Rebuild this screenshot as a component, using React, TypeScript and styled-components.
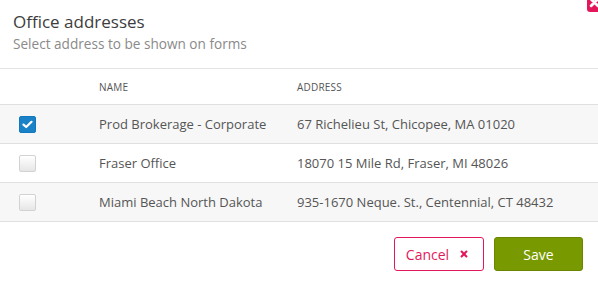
import React, { useState } from "react";
import styled, { createGlobalStyle } from "styled-components";

const Global = createGlobalStyle`
  html, body { margin: 0; padding: 0; background: #fff; }
  body { font-family: "Open Sans", "Noto Sans", sans-serif; overflow: hidden; }
  * { box-sizing: border-box; }
`;

const Modal = styled.div`
  position: relative;
  width: 598px;
  height: 285px;
  background: #fff;
`;

const CloseBtn = styled.button`
  position: absolute;
  top: -10px;
  left: 587px;
  width: 22px;
  height: 22px;
  border: none;
  border-radius: 3px;
  background: #e2185b;
  display: flex;
  align-items: flex-end;
  justify-content: flex-start;
  padding: 0 0 4px 2px;
  cursor: pointer;
`;

const Header = styled.div`
  padding: 10px 13px 14px;
  border-bottom: 1px solid #e4e4e4;
`;

const Title = styled.h1`
  margin: 0;
  font-size: 17px;
  font-weight: 400;
  color: #3d3d3d;
  line-height: 24px;
`;

const Subtitle = styled.p`
  margin: 0;
  font-size: 13.6px;
  color: #8a8a8a;
  line-height: 20px;
`;

const Table = styled.div`
  display: grid;
  grid-template-columns: 99px 198px 1fr;
`;

const Row = styled.div<{ $striped?: boolean; $head?: boolean }>`
  display: contents;
  & > div {
    background: ${(p) => (p.$striped ? "#f7f7f7" : "#fff")};
    border-bottom: 1px solid #e0e0e0;
    height: ${(p) => (p.$head ? "36px" : "39px")};
  }
`;

const Cell = styled.div<{ $head?: boolean }>`
  display: flex;
  align-items: center;
  font-size: ${(p) => (p.$head ? "10px" : "13px")};
  color: #555;
  letter-spacing: ${(p) => (p.$head ? "0.2px" : "0")};
  text-transform: ${(p) => (p.$head ? "uppercase" : "none")};
  white-space: nowrap;
`;

const CheckCell = styled.div`
  display: flex;
  align-items: center;
  padding-left: 19px;
`;

const Box = styled.span<{ $checked: boolean }>`
  width: 17px;
  height: 17px;
  border-radius: 2px;
  display: flex;
  align-items: center;
  justify-content: center;
  cursor: pointer;
  border: 1px solid ${(p) => (p.$checked ? "#1378bd" : "#d2d2d2")};
  background: ${(p) =>
    p.$checked
      ? "#1a82c6"
      : "linear-gradient(to bottom, #ffffff 0%, #f4f4f4 45%, #e6e6e6 100%)"};
  box-shadow: ${(p) => (p.$checked ? "none" : "inset 0 1px 0 #fff")};
`;

const Footer = styled.div`
  display: flex;
  justify-content: flex-end;
  gap: 10px;
  padding: 15px 15px 0 0;
`;

const CancelButton = styled.button`
  width: 90px;
  height: 34px;
  border: 1px solid #e2185b;
  border-radius: 3px;
  background: #fff;
  color: #e2185b;
  font-family: inherit;
  font-size: 14px;
  display: flex;
  align-items: center;
  justify-content: center;
  gap: 11px;
  padding: 0 4px 0 0;
  cursor: pointer;
`;

const SaveButton = styled.button`
  width: 89px;
  height: 34px;
  border: 1px solid #6a8600;
  border-radius: 3px;
  background: #789a00;
  color: #fff;
  font-family: inherit;
  font-size: 14px;
  cursor: pointer;
`;

const rows = [
  { name: "Prod Brokerage - Corporate", address: "67 Richelieu St, Chicopee, MA 01020", checked: true },
  { name: "Fraser Office", address: "18070 15 Mile Rd, Fraser, MI 48026", checked: false },
  { name: "Miami Beach North Dakota", address: "935-1670 Neque. St., Centennial, CT 48432", checked: false },
];

const Check = () => (
  <svg width="11" height="9" viewBox="0 0 11 9">
    <path d="M1.5 4.6 L4.2 7 L9.5 1.8" stroke="#fff" strokeWidth="2.2" fill="none" strokeLinecap="round" strokeLinejoin="round" />
  </svg>
);

const XIcon = ({ color, size }: { color: string; size: number }) => (
  <svg width={size} height={size} viewBox="0 0 10 10">
    <path d="M2 2 L8 8 M8 2 L2 8" stroke={color} strokeWidth="2.6" strokeLinecap="round" />
  </svg>
);

export default function App() {
  const [state, setState] = useState(rows.map((r) => r.checked));
  return (
    <>
      <Global />
      <Modal>
        <CloseBtn aria-label="Close">
          <XIcon color="#fff" size={11} />
        </CloseBtn>
        <Header>
          <Title>Office addresses</Title>
          <Subtitle>Select address to be shown on forms</Subtitle>
        </Header>
        <Table>
          <Row $head>
            <CheckCell />
            <Cell $head>Name</Cell>
            <Cell $head>Address</Cell>
          </Row>
          {rows.map((r, i) => (
            <Row key={r.name} $striped={i % 2 === 0}>
              <CheckCell>
                <Box
                  $checked={state[i]}
                  onClick={() => setState((s) => s.map((v, j) => (j === i ? !v : v)))}
                >
                  {state[i] && <Check />}
                </Box>
              </CheckCell>
              <Cell>{r.name}</Cell>
              <Cell>{r.address}</Cell>
            </Row>
          ))}
        </Table>
        <Footer>
          <CancelButton>
            Cancel <XIcon color="#e2185b" size={8} />
          </CancelButton>
          <SaveButton>Save</SaveButton>
        </Footer>
      </Modal>
    </>
  );
}
